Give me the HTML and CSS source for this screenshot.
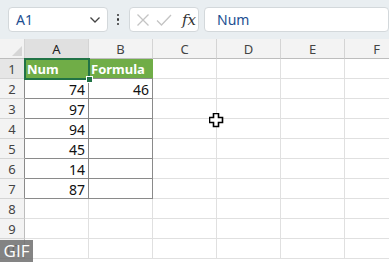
FILE: index.html
```html
<!DOCTYPE html>
<html>
<head>
<meta charset="utf-8">
<link rel="stylesheet" href="styles.css">
</head>
<body>
<div class="app">
  <div class="toolbar">
    <div class="namebox"><span class="ref">A1</span>
      <svg class="chev" width="12" height="8" viewBox="0 0 12 8"><path d="M1.5 1.5 L6 6 L10.5 1.5" fill="none" stroke="#444" stroke-width="1.3"/></svg>
    </div>
    <div class="dots"><i></i><i></i><i></i></div>
    <div class="fbtns">
      <svg width="14" height="14" viewBox="0 0 14 14"><path d="M1.5 1.5 L12.5 12.5 M12.5 1.5 L1.5 12.5" stroke="#c4c4c4" stroke-width="1.3"/></svg>
      <svg width="16" height="14" viewBox="0 0 16 14"><path d="M1 7.5 L5.5 12 L15 2" fill="none" stroke="#c4c4c4" stroke-width="1.3"/></svg>
      <span class="fx">fx</span>
    </div>
    <div class="finput">Num</div>
  </div>
  <div class="sheet">
    <div class="corner"><svg width="10" height="10" viewBox="0 0 10 10"><path d="M10 0 L10 10 L0 10 Z" fill="#d6d6d6"/></svg></div>
    <div class="ch sel">A</div><div class="ch">B</div><div class="ch">C</div><div class="ch">D</div><div class="ch">E</div><div class="ch">F</div>

    <div class="rh selr">1</div><div class="c hd">Num</div><div class="c hd">Formula</div><div class="c"></div><div class="c"></div><div class="c"></div><div class="c"></div>
    <div class="rh dk">2</div><div class="c b n">74</div><div class="c b n">46</div><div class="c"></div><div class="c"></div><div class="c"></div><div class="c"></div>
    <div class="rh dk">3</div><div class="c b n">97</div><div class="c b"></div><div class="c"></div><div class="c"></div><div class="c"></div><div class="c"></div>
    <div class="rh dk">4</div><div class="c b n">94</div><div class="c b"></div><div class="c"></div><div class="c"></div><div class="c"></div><div class="c"></div>
    <div class="rh dk">5</div><div class="c b n">45</div><div class="c b"></div><div class="c"></div><div class="c"></div><div class="c"></div><div class="c"></div>
    <div class="rh dk">6</div><div class="c b n">14</div><div class="c b"></div><div class="c"></div><div class="c"></div><div class="c"></div><div class="c"></div>
    <div class="rh dk">7</div><div class="c b n">87</div><div class="c b"></div><div class="c"></div><div class="c"></div><div class="c"></div><div class="c"></div>
    <div class="rh">8</div><div class="c"></div><div class="c"></div><div class="c"></div><div class="c"></div><div class="c"></div><div class="c"></div>
    <div class="rh">9</div><div class="c"></div><div class="c"></div><div class="c"></div><div class="c"></div><div class="c"></div><div class="c"></div>
    <div class="rh">10</div><div class="c"></div><div class="c"></div><div class="c"></div><div class="c"></div><div class="c"></div><div class="c"></div>

    <div class="selection"><span class="handle"></span></div>
  </div>
  <svg class="cursor" width="15" height="15" viewBox="0 0 15 15"><path d="M4.5 0.5 H9.5 V4.5 H13.5 V9.5 H9.5 V13.5 H4.5 V9.5 H0.5 V4.5 H4.5 Z" fill="#fff" stroke="#000" stroke-width="1.6"/></svg>
  <div class="gif">GIF</div>
</div>
</body>
</html>
```

FILE: styles.css
```css
* { box-sizing: border-box; }
html, body { margin: 0; padding: 0; }
body { width: 389px; height: 262px; overflow: hidden; background: #fff; font-family: "Noto Sans", "Open Sans", sans-serif; }
.app { position: relative; width: 389px; height: 262px; overflow: hidden; }

.toolbar { height: 39px; background: #e9eef1; display: flex; align-items: center; padding-left: 8px; }
.namebox { width: 102px; height: 25px; background: #fff; border: 1px solid #d3d8db; border-radius: 4px; display: flex; align-items: center; justify-content: space-between; padding: 0 6px 0 7px; }
.ref { color: #1d4f91; font-size: 14px; }
.dots { width: 22px; display: flex; flex-direction: column; align-items: center; gap: 2px; }
.dots i { display: block; width: 2.5px; height: 2.5px; background: #333; border-radius: 1px; }
.fbtns { width: 72px; height: 25px; background: #fff; border: 1px solid #d3d8db; border-radius: 4px; display: flex; align-items: center; padding-left: 6px; gap: 6px; }
.fx { font-family: "DejaVu Serif", "Liberation Serif", serif; font-style: italic; font-size: 15px; color: #333; margin-left: 4px; }
.finput { margin-left: 5px; width: 190px; height: 25px; background: #fff; border: 1px solid #d3d8db; border-radius: 4px; color: #1d4f91; font-size: 14px; padding-left: 12px; display: flex; align-items: center; }

.sheet { position: relative; display: grid; grid-template-columns: 25px repeat(6, 64px); grid-auto-rows: 20px; }
.corner { background: #f3f3f3; border-right: 1px solid #d4d4d4; border-bottom: 1px solid #bdbdbd; display: flex; align-items: flex-end; justify-content: flex-end; padding: 0 2px 2px 0; }
.ch { background: #f3f3f3; border-right: 1px solid #d4d4d4; border-bottom: 1px solid #bdbdbd; text-align: center; font-size: 13px; color: #444; line-height: 21px; }
.ch.sel { background: #e0e0e0; color: #222; }
.rh { background: #f3f3f3; border-right: 1px solid #bdbdbd; border-bottom: 1px solid #d4d4d4; text-align: center; font-size: 13px; color: #444; line-height: 21px; }
.rh.selr { background: #e6e6e6; }
.rh.dk { border-right-color: #8a8a8a; }
.c { border-right: 1px solid #e0e0e0; border-bottom: 1px solid #e0e0e0; font-size: 14px; line-height: 21px; color: #111; padding: 0 3px; white-space: nowrap; }
.c.b { border-right-color: #8a8a8a; border-bottom-color: #8a8a8a; }
.c.n { text-align: right; }
.c.hd { background: #70ad47; color: #fff; font-weight: bold; font-size: 13px; border-right-color: #70ad47; border-bottom-color: #8a8a8a; padding-left: 2px; }

.selection { position: absolute; left: 24px; top: 19px; width: 66px; height: 22px; border: 2px solid #217346; pointer-events: none; }
.handle { position: absolute; right: -5px; bottom: -5px; width: 7px; height: 7px; background: #217346; border: 1px solid #fff; }

.cursor { position: absolute; left: 209px; top: 113px; }
.gif { position: absolute; left: 0; bottom: 0; width: 33px; height: 22px; background: rgba(110,110,110,0.85); color: #fff; font-family: "Open Sans", "Noto Sans", sans-serif; font-size: 17px; line-height: 22px; text-align: center; }
```
